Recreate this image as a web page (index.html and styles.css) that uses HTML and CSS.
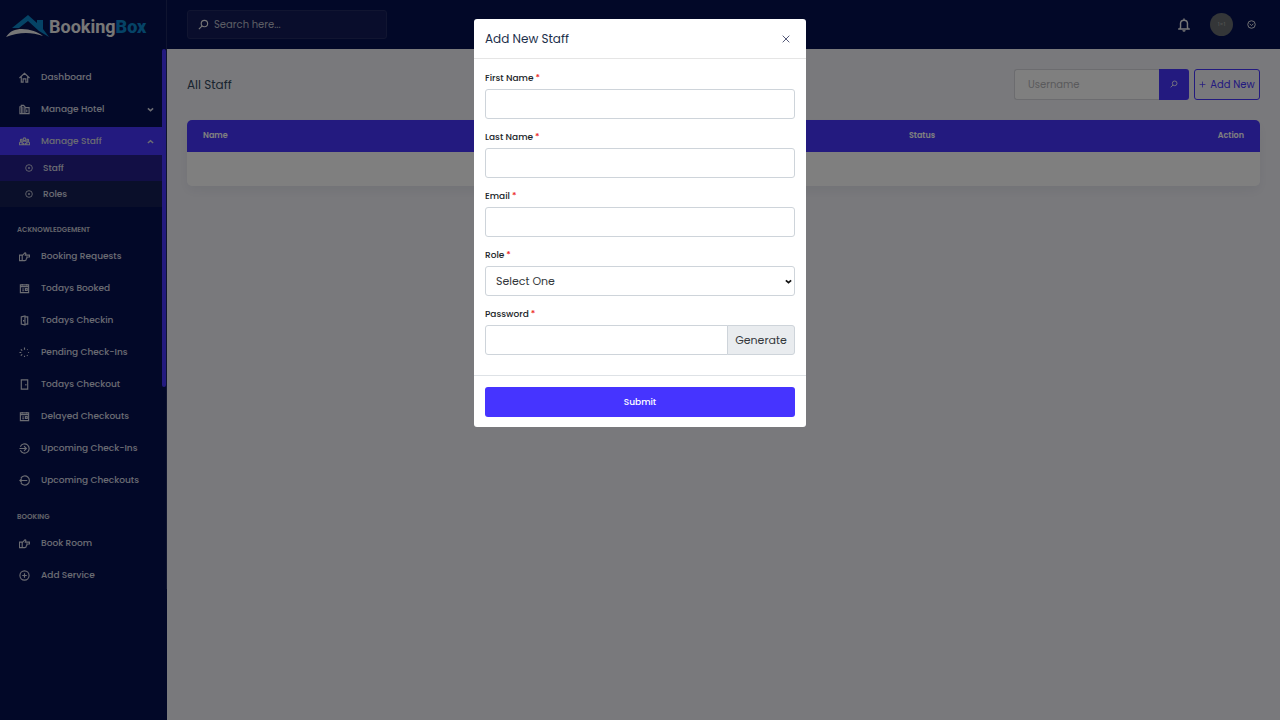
FILE: index.html
```
<!DOCTYPE html>
<html lang="en">
<head>
  <meta charset="UTF-8">
  <meta name="viewport" content="width=device-width, initial-scale=1.0">
  <title>BookingBox - All Staff</title>
  <link rel="stylesheet" href="styles.css">
</head>
<body>
  <!-- Icons -->
  <svg class="sprite" aria-hidden="true">
    <symbol id="home" viewBox="0 0 24 24"><path d="M1 13 12 3l11 10M5 10v12h4v-7h6v7h4V10"/></symbol>
    <symbol id="hotel" viewBox="0 0 24 24"><path class="shade" d="M5 6h7v15H5z"/><path d="M2 21V6h3V3h5l3 3v15zM13 8h9v13h-9M6 6v15M17 12v6"/></symbol>
    <symbol id="users" viewBox="0 0 24 24"><path d="M1 20v-5l3-3 3 2M23 20v-5l-3-3-3 2M7 20v-6l3-3h4l3 3v6M1 19h22M10 15v5M14 15v5"/><circle cx="12" cy="7" r="3"/><circle cx="5" cy="9" r="2"/><circle cx="19" cy="9" r="2"/></symbol>
    <symbol id="dot" viewBox="0 0 24 24"><circle cx="12" cy="12" r="10"/><circle cx="12" cy="12" r="2"/></symbol>
    <symbol id="hand" viewBox="0 0 24 24"><path d="M1 9h6v12H1zM7 10l6-6c3 0 2 3 1 5h9v4h-6c1 3 0 3-1 4 0 3-1 4-3 4H7"/></symbol>
    <symbol id="calendar" viewBox="0 0 24 24"><path d="M3 4h18v17H3zM3 8h18M7 2v4M17 2v4M7 13h4M7 17h4M14 12h4v4h-4z"/></symbol>
    <symbol id="door-open" viewBox="0 0 24 24"><path d="m5 4 8-2v20l-8-2zM13 4h6v16h-6M10 11v3"/></symbol>
    <symbol id="door" viewBox="0 0 24 24"><path d="M5 2h14v20H5zM15 11v3"/></symbol>
    <symbol id="spinner" viewBox="0 0 24 24"><path d="M12 1v5M12 19v3M1 12h4M20 12h2M4 5l3 3M17 18l2 1M4 19l3-3M18 6l1-1"/></symbol>
    <symbol id="in" viewBox="0 0 24 24"><path d="M3 8a10 10 0 1 1 0 8M1 12h15M11 7l5 5-5 5"/></symbol>
    <symbol id="out" viewBox="0 0 24 24"><path d="M4 7a10 10 0 1 1 0 10M18 12H2M6 8l-4 4 4 4"/></symbol>
    <symbol id="plus-circle" viewBox="0 0 24 24"><circle cx="12" cy="12" r="10"/><path d="M12 7v10M7 12h10"/></symbol>
    <symbol id="search" viewBox="0 0 24 24"><circle cx="14" cy="10" r="7"/><path d="m9 15-7 7"/></symbol>
    <symbol id="bell" viewBox="0 0 24 24"><path d="M2 19h20M5 19c2-3 1-6 1-9 0-8 12-8 12 0 0 3-1 6 1 9M10 21c1 2 3 2 4 0M12 1v3"/></symbol>
    <symbol id="chevron-circle" viewBox="0 0 24 24"><circle cx="12" cy="12" r="10"/><path d="m7 10 5 5 5-5"/></symbol>
    <symbol id="down" viewBox="0 0 24 24"><path d="m3 8 9 8 9-8"/></symbol>
    <symbol id="up" viewBox="0 0 24 24"><path d="m3 17 9-8 9 8"/></symbol>
    <symbol id="plus" viewBox="0 0 24 24"><path d="M12 2v20M2 12h20"/></symbol>
    <symbol id="close" viewBox="0 0 24 24"><path d="m2 2 20 20M22 2 2 22"/></symbol>
  </svg>

  <div class="page">
    <aside class="sidebar">
      <a class="logo" href="#">
        <svg class="logo-mark" viewBox="0 0 43 24">
          <path class="roof" d="M6 14 22 1l9 8V6h6v9l6 8-10-6-11-10-9 7z"/>
          <path class="hill" d="M0 23c4-6 9-8 16-8 8 0 16 3 21 7-12-4-24-4-37 1z"/>
        </svg>
        <span class="logo-text">Booking<b>Box</b></span>
      </a>
      <nav class="menu">
        <ul>
          <li><a href="#"><svg class="icon"><use href="#home"/></svg>Dashboard</a></li>
          <li><a href="#"><svg class="icon"><use href="#hotel"/></svg>Manage Hotel<svg class="icon arrow"><use href="#down"/></svg></a></li>
          <li class="open">
            <a class="active" href="#"><svg class="icon"><use href="#users"/></svg>Manage Staff<svg class="icon arrow"><use href="#up"/></svg></a>
            <ul class="submenu">
              <li><a class="current" href="#"><svg class="icon"><use href="#dot"/></svg>Staff</a></li>
              <li><a href="#"><svg class="icon"><use href="#dot"/></svg>Roles</a></li>
            </ul>
          </li>
        </ul>
        <h2>Acknowledgement</h2>
        <ul>
          <li><a href="#"><svg class="icon"><use href="#hand"/></svg>Booking Requests</a></li>
          <li><a href="#"><svg class="icon"><use href="#calendar"/></svg>Todays Booked</a></li>
          <li><a href="#"><svg class="icon"><use href="#door-open"/></svg>Todays Checkin</a></li>
          <li><a href="#"><svg class="icon"><use href="#spinner"/></svg>Pending Check-Ins</a></li>
          <li><a href="#"><svg class="icon"><use href="#door"/></svg>Todays Checkout</a></li>
          <li><a href="#"><svg class="icon"><use href="#calendar"/></svg>Delayed Checkouts</a></li>
          <li><a href="#"><svg class="icon"><use href="#in"/></svg>Upcoming Check-Ins</a></li>
          <li><a href="#"><svg class="icon"><use href="#out"/></svg>Upcoming Checkouts</a></li>
        </ul>
        <h2>Booking</h2>
        <ul>
          <li><a href="#"><svg class="icon"><use href="#hand"/></svg>Book Room</a></li>
          <li><a href="#"><svg class="icon"><use href="#plus-circle"/></svg>Add Service</a></li>
        </ul>
        <span class="scroll-thumb"></span>
      </nav>
    </aside>

    <div class="main">
      <header class="topbar">
        <label class="top-search">
          <svg class="icon"><use href="#search"/></svg>
          <input type="search" placeholder="Search here..." aria-label="Search here">
        </label>
        <div class="top-right">
          <button class="bell" type="button" aria-label="Notifications"><svg class="icon"><use href="#bell"/></svg></button>
          <button class="profile" type="button" aria-label="Profile">
            <span class="avatar">1×1</span>
            <svg class="icon"><use href="#chevron-circle"/></svg>
          </button>
        </div>
      </header>

      <main class="content">
        <div class="title-row">
          <h1>All Staff</h1>
          <div class="tools">
            <form class="user-search">
              <input type="text" placeholder="Username" aria-label="Username">
              <button type="submit" aria-label="Search"><svg class="icon"><use href="#search"/></svg></button>
            </form>
            <button class="add-new" type="button"><svg class="icon"><use href="#plus"/></svg>Add New</button>
          </div>
        </div>
        <table>
          <thead>
            <tr><th>Name</th><th>Email</th><th class="status">Status</th><th class="action">Action</th></tr>
          </thead>
          <tbody>
            <tr><td colspan="4"></td></tr>
          </tbody>
        </table>
      </main>
    </div>
  </div>

  <!-- Add staff modal -->
  <div class="backdrop">
    <div class="modal" role="dialog" aria-labelledby="modal-title">
      <div class="modal-header">
        <h3 id="modal-title">Add New Staff</h3>
        <button class="close" type="button" aria-label="Close"><svg class="icon"><use href="#close"/></svg></button>
      </div>
      <form>
        <div class="modal-body">
          <div class="field">
            <label for="firstname">First Name<span>*</span></label>
            <input type="text" id="firstname" name="firstname">
          </div>
          <div class="field">
            <label for="lastname">Last Name<span>*</span></label>
            <input type="text" id="lastname" name="lastname">
          </div>
          <div class="field">
            <label for="email">Email<span>*</span></label>
            <input type="email" id="email" name="email">
          </div>
          <div class="field">
            <label for="role">Role<span>*</span></label>
            <div class="select-wrap">
              <select id="role" name="role">
                <option>Select One</option>
              </select>
              <svg class="icon"><use href="#down"/></svg>
            </div>
          </div>
          <div class="field">
            <label for="password">Password<span>*</span></label>
            <div class="input-group">
              <input type="text" id="password" name="password">
              <button class="generate" type="button">Generate</button>
            </div>
          </div>
        </div>
        <div class="modal-footer">
          <button class="submit" type="submit">Submit</button>
        </div>
      </form>
    </div>
  </div>
</body>
</html>
```
FILE: styles.css
```
* {
  box-sizing: border-box;
}
body {
  margin: 0;
  font-family: Poppins, Inter, sans-serif;
  font-size: 10px;
  color: #34495e;
  background: #f3f3f9;
}
h1, h2, h3, ul {
  margin: 0;
  padding: 0;
  font-weight: 400;
}
ul {
  list-style: none;
}
a {
  color: inherit;
  text-decoration: none;
}
button, input, select {
  font: inherit;
  color: inherit;
}
button {
  padding: 0;
  border: none;
  background: none;
  cursor: pointer;
}
.sprite {
  display: none;
}
.icon {
  width: 11px;
  height: 11px;
  flex: none;
  fill: none;
  stroke: currentColor;
  stroke-width: 2.5;
}
.shade {
  fill: currentColor;
  fill-opacity: 0.4;
  stroke: none;
}
.page {
  display: flex;
  min-height: 100vh;
}

/* Sidebar */
.sidebar {
  width: 167px;
  flex: none;
  background: #051050;
  color: #d6d8e4;
}
.logo {
  display: flex;
  align-items: center;
  height: 49px;
  padding: 3px 6px 0;
  border-right: 1px solid #1e2861;
}
.logo-mark {
  width: 43px;
  height: 24px;
}
.roof {
  fill: #0b86cc;
}
.hill {
  fill: #eee;
}
.logo-text {
  font: 700 18px Roboto, sans-serif;
  color: #eee;
}
.logo-text b {
  color: #0b86cc;
}
.menu {
  position: relative;
  padding: 14px 4px 0 0;
  border-right: 1px solid #1e2861;
}
.menu li {
  margin-bottom: 4px;
}
.menu a {
  display: flex;
  align-items: center;
  gap: 11px;
  height: 28px;
  padding: 0 8px 0 19px;
  font-size: 9px;
  font-weight: 500;
}
.menu .active {
  background: #4634ff;
}
.menu .arrow {
  width: 7px;
  height: 7px;
  margin-left: auto;
  stroke-width: 5;
}
.menu .submenu li {
  margin: 0;
}
.menu .submenu a {
  height: 26px;
  padding-left: 25px;
  gap: 10px;
  background: #151e54;
}
.menu .submenu .current {
  background: #251f8a;
}
.submenu .icon {
  width: 8px;
  height: 8px;
}
.menu h2 {
  padding: 13px 17px 6px;
  font-size: 7px;
  line-height: 12px;
  font-weight: 600;
  text-transform: uppercase;
  color: #c4c6d4;
}
.scroll-thumb {
  position: absolute;
  top: 0;
  right: 0;
  width: 4px;
  height: 338px;
  border-radius: 4px;
  background: #4634ff;
}

/* Top bar */
.main {
  flex: 1;
  min-width: 0;
}
.topbar {
  display: flex;
  align-items: center;
  justify-content: space-between;
  height: 49px;
  padding: 0 24px 0 20px;
  background: #051050;
  color: #eee;
}
.top-search {
  display: flex;
  align-items: center;
  gap: 5px;
  width: 200px;
  height: 29px;
  padding: 0 10px;
  border: 1px solid #222b62;
  border-radius: 3px;
  background: #121b58;
}
.top-search input {
  min-width: 0;
  flex: 1;
  padding: 0;
  border: none;
  background: none;
}
.top-search input::placeholder {
  color: #b8bac8;
}
.top-right, .profile {
  display: flex;
  align-items: center;
}
.top-right {
  gap: 19px;
}
.bell .icon {
  display: block;
  width: 14px;
  height: 14px;
}
.profile {
  gap: 14px;
}
.profile .icon {
  width: 9px;
  height: 9px;
}
.avatar {
  width: 23px;
  height: 23px;
  border-radius: 50%;
  background: #686d70;
  font-size: 6px;
  line-height: 23px;
  color: #a6a6a6;
}

/* Content */
.content {
  padding: 20px;
}
.title-row, .tools, .user-search {
  display: flex;
  align-items: center;
}
.title-row {
  justify-content: space-between;
  margin-bottom: 20px;
}
h1 {
  font-size: 12px;
  font-weight: 400;
}
.tools {
  gap: 5px;
}
.user-search input {
  width: 145px;
  height: 31px;
  padding: 0 13px;
  border: 1px solid #d8d9de;
  border-right: none;
  border-radius: 3px 0 0 3px;
  background: #fff;
}
.user-search input::placeholder {
  color: #b5b5b9;
}
.user-search button {
  width: 30px;
  height: 31px;
  border-radius: 0 3px 3px 0;
  background: #4634ff;
  color: #fff;
}
.user-search .icon {
  width: 8px;
  height: 8px;
}
.add-new {
  display: flex;
  align-items: center;
  justify-content: center;
  gap: 4px;
  width: 66px;
  height: 31px;
  border: 1px solid #4634ff;
  border-radius: 3px;
  color: #4634ff;
}
.add-new .icon {
  width: 7px;
  height: 7px;
}
table {
  width: 100%;
  table-layout: fixed;
  border-spacing: 0;
  border-radius: 5px;
  overflow: hidden;
  background: #fff;
  box-shadow: 0 5px 12px rgba(18, 38, 63, 0.06);
}
th {
  height: 32px;
  padding: 0 16px;
  background: #4634ff;
  font-size: 8px;
  font-weight: 600;
  color: #fff;
  text-align: center;
}
th:first-child {
  text-align: left;
}
.status {
  width: 23%;
}
.action {
  width: 20%;
  text-align: right;
}
td {
  height: 34px;
  padding: 0;
}

/* Modal */
.backdrop {
  position: fixed;
  inset: 0;
  padding-top: 19px;
  background: rgba(0, 0, 0, 0.5);
}
.modal {
  width: 332px;
  margin: 0 auto;
  border-radius: 3px;
  background: #fff;
}
.modal-header {
  display: flex;
  align-items: center;
  justify-content: space-between;
  height: 40px;
  padding: 0 16px 0 11px;
  border-bottom: 1px solid #e5e5e5;
}
.modal-header h3 {
  font-size: 12px;
  color: #1c2f4a;
}
.close .icon {
  display: block;
  width: 8px;
  height: 8px;
  color: #34395e;
}
.modal-body {
  display: grid;
  gap: 11px;
  padding: 12px 11px 20px;
}
.field label {
  display: block;
  margin-bottom: 3px;
  font-size: 9px;
  line-height: 15px;
  font-weight: 500;
  color: #212529;
}
.field label span {
  margin-left: 2px;
  color: #eb2222;
}
.field input, .field select {
  display: block;
  width: 100%;
  height: 30px;
  padding: 0 10px;
  border: 1px solid #ced4da;
  border-radius: 3px;
  background: #fff;
  font-size: 11px;
  color: #34383c;
}
.select-wrap {
  position: relative;
}
.field select {
  appearance: none;
}
.select-wrap .icon {
  position: absolute;
  top: 12px;
  right: 3px;
  width: 7px;
  height: 7px;
  color: #111;
  stroke-width: 6;
  pointer-events: none;
}
.input-group {
  display: flex;
}
.field .input-group input {
  flex: 1;
  min-width: 0;
  border-radius: 3px 0 0 3px;
}
.generate {
  width: 68px;
  margin-left: -1px;
  border: 1px solid #ced4da;
  border-radius: 0 3px 3px 0;
  background: #e9ecef;
  font-size: 11px;
  color: #34383c;
}
.modal-footer {
  padding: 11px 11px 10px;
  border-top: 1px solid #dee2e6;
}
.submit {
  width: 100%;
  height: 30px;
  border-radius: 3px;
  background: #4634ff;
  font-size: 9px;
  font-weight: 500;
  color: #fff;
}
```
